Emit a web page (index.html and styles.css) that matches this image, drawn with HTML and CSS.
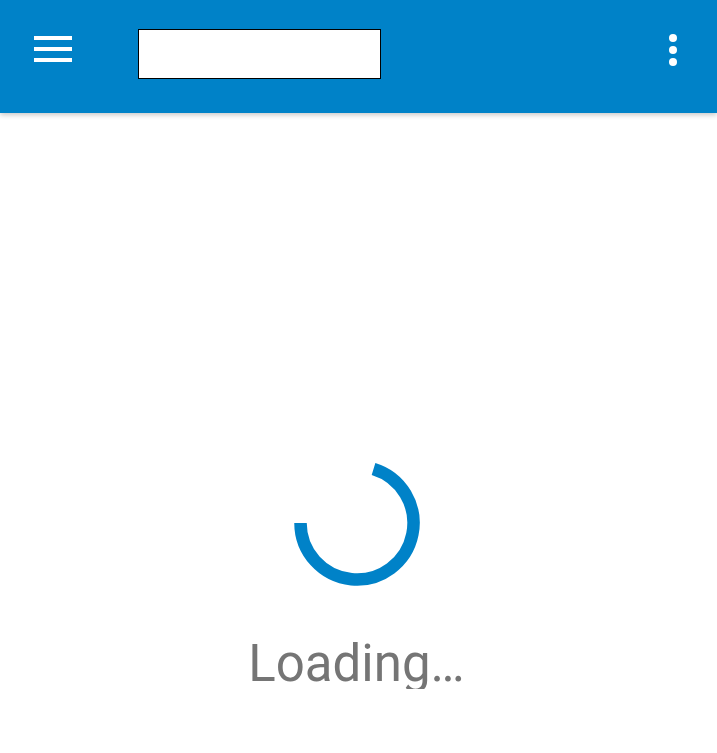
FILE: index.html
```html
<!DOCTYPE html>
<html lang="en">
<head>
<meta charset="utf-8">
<title>Loading</title>
<link rel="stylesheet" href="styles.css">
</head>
<body>
<header class="appbar">
  <button class="menu-btn" aria-label="Menu">
    <svg width="38" height="26" viewBox="0 0 38 26"><rect x="0" y="0" width="38" height="4" fill="#fff"/><rect x="0" y="11" width="38" height="4" fill="#fff"/><rect x="0" y="22" width="38" height="4" fill="#fff"/></svg>
  </button>
  <div class="search-box"></div>
  <button class="more-btn" aria-label="More">
    <svg width="10" height="32" viewBox="0 0 10 32"><circle cx="5" cy="4" r="4" fill="#fff"/><circle cx="5" cy="16" r="4" fill="#fff"/><circle cx="5" cy="28" r="4" fill="#fff"/></svg>
  </button>
</header>
<main class="content">
  <svg class="spinner" width="130" height="130" viewBox="0 0 130 130">
    <path d="M 81.52 10.97 A 56.5 56.5 0 1 1 8.5 65" fill="none" stroke="#0082c8" stroke-width="12.5"/>
  </svg>
  <div class="loading-text">Loading…</div>
</main>
</body>
</html>
```
FILE: styles.css
```css
html, body {
  margin: 0;
  padding: 0;
  background: #ffffff;
  font-family: Roboto, "Noto Sans", sans-serif;
}
.appbar {
  height: 113px;
  background: #0082c8;
  display: flex;
  align-items: flex-start;
  box-shadow: 0 2px 5px rgba(0, 0, 0, 0.22);
  position: relative;
  z-index: 1;
}
.menu-btn, .more-btn {
  background: none;
  border: 0;
  padding: 0;
  display: flex;
}
.menu-btn {
  margin: 36px 0 0 34px;
}
.search-box {
  margin: 29px 0 0 66px;
  width: 241px;
  height: 48px;
  border: 1px solid #000;
  background: #fff;
}
.more-btn {
  margin: 34px 39px 0 auto;
}
.content {
  display: flex;
  flex-direction: column;
  align-items: center;
  padding-top: 345px;
  padding-right: 4px;
}
.spinner {
  display: block;
}
.loading-text {
  margin-top: 50px;
  font-size: 51px;
  line-height: 1;
  color: #757575;
}
```
